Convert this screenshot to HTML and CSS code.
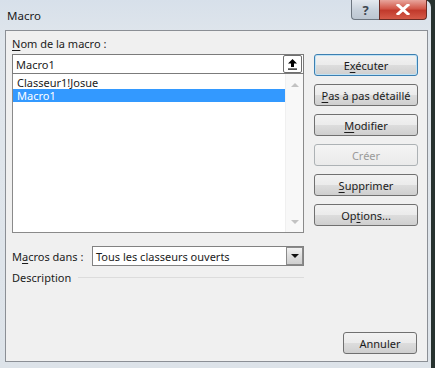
FILE: index.html
```html
<!DOCTYPE html>
<html lang="fr">
<head>
  <meta charset="UTF-8">
  <title>Macro</title>
  <link rel="stylesheet" href="styles.css">
</head>
<body>
  <div class="window">
    <div class="titlebar">
      <span class="title">Macro</span>
      <div class="caption-btns">
        <span class="cap-btn help">?</span>
        <span class="cap-btn close">
          <svg width="14" height="11" viewBox="0 0 14 11"><path d="M2 1 L12 10 M12 1 L2 10" stroke="#fff" stroke-width="3" stroke-linecap="square"/></svg>
        </span>
      </div>
    </div>

    <div class="panel">
      <div class="main">
        <div class="left">
          <div class="label"><u>N</u>om de la macro :</div>
          <div class="name-box">
            <span class="name-value">Macro1</span>
            <span class="collapse-btn">
              <svg width="11" height="12" viewBox="0 0 11 12"><path d="M5.5 1 L10 5.5 L7 5.5 L7 9 L4 9 L4 5.5 L1 5.5 Z" fill="#000"/><rect x="1" y="10.5" width="9" height="1.2" fill="#000"/></svg>
            </span>
          </div>
          <div class="macro-list">
            <div class="items">
              <div class="item">Classeur1!Josue</div>
              <div class="item selected">Macro1</div>
            </div>
            <div class="scrollbar">
              <span class="arrow up"></span>
              <span class="arrow down"></span>
            </div>
          </div>
          <div class="where">
            <span class="where-label">M<u>a</u>cros dans :</span>
            <div class="select">
              <span class="select-value">Tous les classeurs ouverts</span>
              <span class="drop-btn"><span class="tri"></span></span>
            </div>
          </div>
          <div class="desc">
            <span>Description</span>
            <span class="rule"></span>
          </div>
        </div>

        <div class="buttons">
          <button class="btn default">E<u>x</u>écuter</button>
          <button class="btn"><u>P</u>as à pas détaillé</button>
          <button class="btn"><u>M</u>odifier</button>
          <button class="btn" disabled>Créer</button>
          <button class="btn"><u>S</u>upprimer</button>
          <button class="btn">Op<u>t</u>ions...</button>
        </div>
      </div>

      <div class="footer">
        <button class="btn cancel">Annuler</button>
      </div>
    </div>
  </div>
</body>
</html>
```

FILE: styles.css
```css
body {
  margin: 0;
  width: 435px;
  height: 368px;
  overflow: hidden;
  background-color: #27322f;
  font-family: 'Noto Sans', 'Open Sans', sans-serif;
  font-size: 11px;
  color: #1b1b1b;
}
u {
  text-decoration-thickness: 1px;
  text-underline-offset: 2px;
}
.window {
  width: 431px;
  height: 368px;
  box-sizing: border-box;
  background: linear-gradient(#d7e0ea, #e0e6ec 40px, #dde3e9);
  border-top-right-radius: 7px;
  padding: 0 3px 0 5px;
}
.titlebar {
  height: 30px;
  display: flex;
  justify-content: space-between;
  align-items: flex-start;
}
.title {
  padding: 8px 0 0 2px;
  font-size: 11.5px;
}
.caption-btns {
  display: flex;
  margin-right: 1px;
}
.cap-btn {
  height: 19px;
  border: 1px solid #6d7680;
  border-top: none;
  display: flex;
  align-items: center;
  justify-content: center;
}
.help {
  width: 27px;
  border-right: none;
  border-bottom-left-radius: 4px;
  background: linear-gradient(#e4e9ef, #c9d2dc 50%, #bcc6d1);
  color: #3d4650;
  font-weight: bold;
  font-size: 13px;
}
.close {
  width: 46px;
  border-bottom-right-radius: 4px;
  background: linear-gradient(#e8a59c, #d2584a 45%, #c13a2c 55%, #d55a48);
  border-color: #6b2b24;
}
.panel {
  height: 332px;
  box-sizing: border-box;
  border: 1px solid #8b8f95;
  background-color: #f0f0f0;
  display: flex;
  flex-direction: column;
  justify-content: space-between;
}
.main {
  display: flex;
  padding-left: 6px;
}
.left {
  width: 292px;
}
.label {
  height: 14px;
  line-height: 14px;
  padding-top: 6px;
  margin-bottom: 3px;
}
.name-box {
  height: 18px;
  border: 1px solid #7b7b7b;
  background-color: #fff;
  display: flex;
  align-items: center;
  justify-content: space-between;
}
.name-value {
  padding-left: 3px;
}
.collapse-btn {
  width: 17px;
  height: 16px;
  margin-right: 1px;
  border: 1px solid #6f6f6f;
  border-radius: 2px;
  background-color: #fff;
  display: flex;
  align-items: center;
  justify-content: center;
}
.macro-list {
  height: 158px;
  border: 1px solid #8a8a8a;
  border-top: none;
  background-color: #fff;
  display: flex;
}
.items {
  flex: 1;
  padding-top: 2px;
}
.item {
  height: 13px;
  line-height: 13px;
  padding-left: 4px;
}
.selected {
  background-color: #3399ff;
  color: #fff;
}
.scrollbar {
  width: 17px;
  background-color: #f8f8f8;
  border-left: 1px solid #f0f0f0;
  display: flex;
  flex-direction: column;
  justify-content: space-between;
  align-items: center;
  padding: 9px 0 8px;
}
.arrow {
  width: 0;
  height: 0;
  border-left: 4px solid transparent;
  border-right: 4px solid transparent;
}
.up {
  border-bottom: 4px solid #c2c2c2;
}
.down {
  border-top: 4px solid #c2c2c2;
}
.where {
  margin-top: 13px;
  display: flex;
  align-items: center;
}
.where-label {
  width: 80px;
}
.select {
  flex: 1;
  height: 18px;
  border: 1px solid #828282;
  background-color: #fff;
  display: flex;
  align-items: center;
  justify-content: space-between;
}
.select-value {
  padding-left: 3px;
}
.drop-btn {
  width: 15px;
  height: 16px;
  border: 1px solid #8a8a8a;
  background: linear-gradient(#f2f2f2, #dedede 50%, #cfcfcf);
  display: flex;
  align-items: center;
  justify-content: center;
}
.tri {
  width: 0;
  height: 0;
  border-left: 4px solid transparent;
  border-right: 4px solid transparent;
  border-top: 4px solid #111;
}
.desc {
  margin-top: 3px;
  display: flex;
  align-items: center;
  gap: 7px;
  height: 16px;
}
.rule {
  flex: 1;
  border-top: 1px solid #dcdcdc;
}
.buttons {
  width: 104px;
  margin-left: 10px;
  padding-top: 23px;
  display: flex;
  flex-direction: column;
  gap: 8px;
}
.btn {
  height: 22px;
  box-sizing: border-box;
  border: 1px solid #707070;
  border-radius: 3px;
  background: linear-gradient(#f2f2f2, #ebebeb 50%, #dddddd 50%, #cfcfcf);
  font-family: inherit;
  font-size: 11px;
  color: #1b1b1b;
  padding: 0;
}
.default {
  border-color: #3c7fb1;
  box-shadow: inset 0 0 0 1px #bfe2f5;
}
.btn:disabled {
  color: #9a9a9a;
  border-color: #adb2b5;
  background: linear-gradient(#f4f4f4, #eaeaea);
}
.footer {
  display: flex;
  justify-content: flex-end;
  padding: 0 10px 7px 0;
}
.cancel {
  width: 74px;
}
```
